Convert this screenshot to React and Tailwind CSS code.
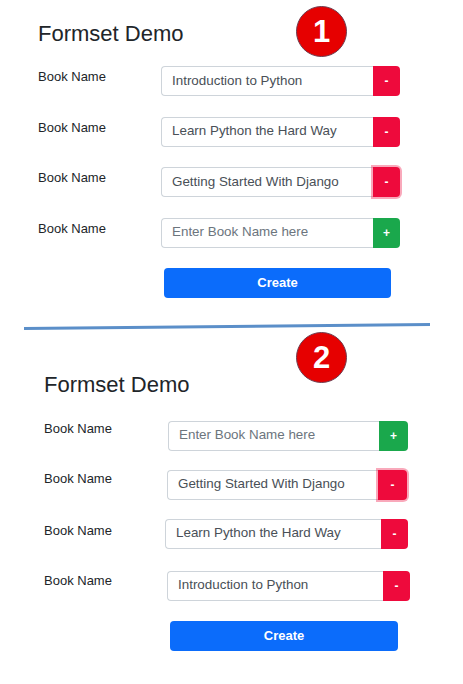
import React from 'react';

const topRows = [
  { value: 'Introduction to Python', kind: 'minus' },
  { value: 'Learn Python the Hard Way', kind: 'minus' },
  { value: 'Getting Started With Django', kind: 'minus', focus: true },
  { value: '', kind: 'plus' },
];

// second capture is slightly skewed, so each row carries its own offsets
const bottomRows = [
  { value: '', kind: 'plus', rowClass: 'mt-[23px]', labelClass: 'mt-[0px]', groupClass: 'ml-[1px] w-[240px]', btnClass: 'w-[29px]' },
  { value: 'Getting Started With Django', kind: 'minus', focus: true, rowClass: 'mt-[19px]', labelClass: 'mt-[1px]', groupClass: 'ml-[0px] w-[240px]', btnClass: 'w-[29px]' },
  { value: 'Learn Python the Hard Way', kind: 'minus', rowClass: 'mt-[19px]', labelClass: 'mt-[4px]', groupClass: 'ml-[-2px] w-[243px]', btnClass: 'w-[27px]' },
  { value: 'Introduction to Python', kind: 'minus', rowClass: 'mt-[22px]', labelClass: 'mt-[2px]', groupClass: 'ml-[0px] w-[243px]', btnClass: 'w-[27px]' },
];

function Badge({ n, className }) {
  return (
    <div className={'absolute w-[51px] h-[51px] rounded-full bg-[#e60000] border-[1.5px] border-[#6e3b4e] flex items-center justify-center ' + className}>
      <span className="text-white font-bold text-[31px] leading-none">{n}</span>
    </div>
  );
}

function InputGroup({ row, groupClass, btnClass }) {
  const isPlus = row.kind === 'plus';
  return (
    <div className={'flex h-[30px] ' + groupClass}>
      <div className="flex-1 flex items-center pl-[10px] border border-[#ced4da] border-r-0 rounded-l-[4px] bg-white text-[13.4px]">
        {row.value ? (
          <span className="text-[#495057]">{row.value}</span>
        ) : (
          <span className="text-[#6c757d]">Enter Book Name here</span>
        )}
      </div>
      <div
        className={
          'h-[30px] rounded-r-[4px] flex items-center justify-center text-white font-bold text-[12px] ' +
          btnClass + ' ' +
          (isPlus ? 'bg-[#1aa84c]' : 'bg-[#ee0a3c]') +
          (row.focus ? ' shadow-[0_0_0_2px_rgba(238,10,60,0.35)]' : '')
        }
      >
        {isPlus ? '+' : '-'}
      </div>
    </div>
  );
}

export default function App() {
  return (
    <div className="w-[463px] h-[684px] bg-white overflow-hidden font-['Liberation_Sans',Arial,sans-serif]">
      {/* first capture */}
      <div className="relative pl-[38px] pt-[21px]">
        <Badge n="1" className="left-[296px] top-[6px]" />
        <h1 className="text-[22px] leading-[26px] text-[#212529]">Formset Demo</h1>
        <div className="flex flex-col gap-[20.5px] mt-[19px]">
          {topRows.map((row, i) => (
            <div key={i} className="flex items-start">
              <div className="w-[123px] shrink-0 mt-[3px] text-[13px] leading-[16px] text-[#212529]">Book Name</div>
              <InputGroup row={row} groupClass="w-[239px]" btnClass="w-[27px]" />
            </div>
          ))}
        </div>
        <div className="ml-[126px] mt-[20px] w-[227px] h-[30px] rounded-[4px] bg-[#0b6cfb] flex items-center justify-center text-white font-bold text-[13px]">
          Create
        </div>
      </div>

      {/* divider between captures */}
      <div className="ml-[24px] mt-[27px] w-[406px] h-[3px] bg-[#5b8fc9] rotate-[-0.55deg]" />

      {/* second capture */}
      <div className="relative pl-[44px]">
        <Badge n="2" className="left-[296px] top-[4px]" />
        <h1 className="pt-[44px] text-[22px] leading-[26px] text-[#212529]">Formset Demo</h1>
        <div className="flex flex-col">
          {bottomRows.map((row, i) => (
            <div key={i} className={'flex items-start ' + row.rowClass}>
              <div className={'w-[123px] shrink-0 text-[13px] leading-[16px] text-[#212529] ' + row.labelClass}>Book Name</div>
              <InputGroup row={row} groupClass={row.groupClass} btnClass={row.btnClass} />
            </div>
          ))}
        </div>
        <div className="ml-[126px] mt-[20px] w-[228px] h-[30px] rounded-[4px] bg-[#0b6cfb] flex items-center justify-center text-white font-bold text-[13px]">
          Create
        </div>
      </div>
    </div>
  );
}
